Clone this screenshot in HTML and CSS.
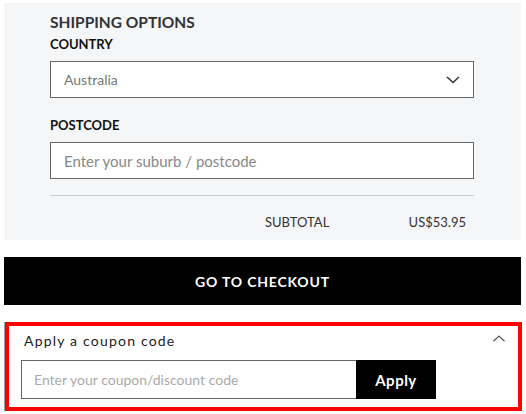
FILE: index.html
```html
<!DOCTYPE html>
<html>
<head>
<meta charset="utf-8">
<link rel="stylesheet" href="styles.css">
</head>
<body>
<div class="page">
  <section class="shipping">
    <h2 class="title">SHIPPING OPTIONS</h2>
    <div class="label label-country">COUNTRY</div>
    <div class="select">
      <span class="select-value">Australia</span>
      <svg class="chev-down" width="14" height="8" viewBox="0 0 14 8"><path d="M1 1 L7 6.5 L13 1" fill="none" stroke="#333" stroke-width="1.6"/></svg>
    </div>
    <div class="label label-post">POSTCODE</div>
    <input class="field" type="text" placeholder="Enter your suburb / postcode">
    <hr class="divider">
    <div class="subtotal">
      <span class="sub-label">SUBTOTAL</span>
      <span class="sub-value">US$53.95</span>
    </div>
  </section>
  <button class="checkout">GO TO CHECKOUT</button>
  <section class="coupon">
    <div class="coupon-head">
      <span class="coupon-title">Apply a coupon code</span>
      <svg class="chev-up" width="12" height="7" viewBox="0 0 12 7"><path d="M0.5 6.2 L6 1 L11.5 6.2" fill="none" stroke="#555" stroke-width="1.2"/></svg>
    </div>
    <div class="coupon-row">
      <input class="coupon-input" type="text" placeholder="Enter your coupon/discount code">
      <button class="apply">Apply</button>
    </div>
  </section>
</div>
</body>
</html>
```
FILE: styles.css
```css
* { box-sizing: border-box; }
body {
  margin: 0;
  background: #fff;
  font-family: "Lato", "Open Sans", sans-serif;
  color: #222;
}
.page {
  padding: 3px 5px 0 4px;
  width: 526px;
}
.shipping {
  background: #f5f6f8;
  padding: 9px 47px 0 46px;
  height: 237px;
}
.title {
  margin: 0;
  font-size: 15.5px;
  line-height: 20px;
  font-weight: 700;
  color: #333;
}
.label {
  font-size: 13px;
  line-height: 16px;
  font-weight: 700;
  color: #111;
}
.label-country { margin-top: 4px; }
.label-post { margin-top: 19px; }
.select {
  margin-top: 9px;
  height: 37px;
  background: #fff;
  border: 1px solid #666;
  display: flex;
  align-items: center;
  justify-content: space-between;
  padding: 0 13px 0 13px;
}
.select-value {
  font-size: 14px;
  color: #777;
}
.chev-down { display: block; margin-top: 1px; }
.field {
  display: block;
  margin-top: 9px;
  width: 100%;
  height: 37px;
  border: 1px solid #666;
  background: #fff;
  padding: 0 13px;
  font-family: inherit;
  font-size: 15px;
  color: #333;
  outline: none;
}
.field::placeholder { color: #888; }
.divider {
  margin: 16px 0 0;
  border: 0;
  border-top: 1px solid #ccc;
  height: 0;
}
.subtotal {
  display: flex;
  align-items: center;
  height: 44px;
  padding: 8px 8px 0 215px;
  font-size: 13px;
  color: #333;
}
.sub-label { flex: 1; }
.checkout {
  display: block;
  margin-top: 17px;
  width: 517px;
  height: 48px;
  border: 0;
  background: #000;
  color: #fff;
  font-family: inherit;
  font-size: 14px;
  font-weight: 700;
  letter-spacing: 0.8px;
}
.coupon {
  margin: 17px 0 0 1px;
  width: 517px;
  height: 89px;
  border: 4px solid #f00;
  box-shadow: -1px 0 0 #999;
  padding: 5px 0 0 12px;
}
.coupon-head {
  display: flex;
  align-items: center;
  justify-content: space-between;
  padding: 0 13px 0 3px;
  height: 18px;
}
.coupon-title {
  font-size: 14px;
  letter-spacing: 1.2px;
  color: #222;
}
.chev-up { display: block; margin-top: -3px; }
.coupon-row {
  display: flex;
  margin-top: 11px;
}
.coupon-input {
  width: 335px;
  height: 39px;
  border: 1px solid #666;
  border-right: 0;
  padding: 0 12px;
  font-family: inherit;
  font-size: 14px;
  outline: none;
  background: #fff;
}
.coupon-input::placeholder { color: #aaa; }
.apply {
  width: 80px;
  height: 39px;
  border: 0;
  background: #000;
  color: #fff;
  font-family: inherit;
  font-size: 15px;
  font-weight: 700;
  letter-spacing: 0.5px;
}
```
